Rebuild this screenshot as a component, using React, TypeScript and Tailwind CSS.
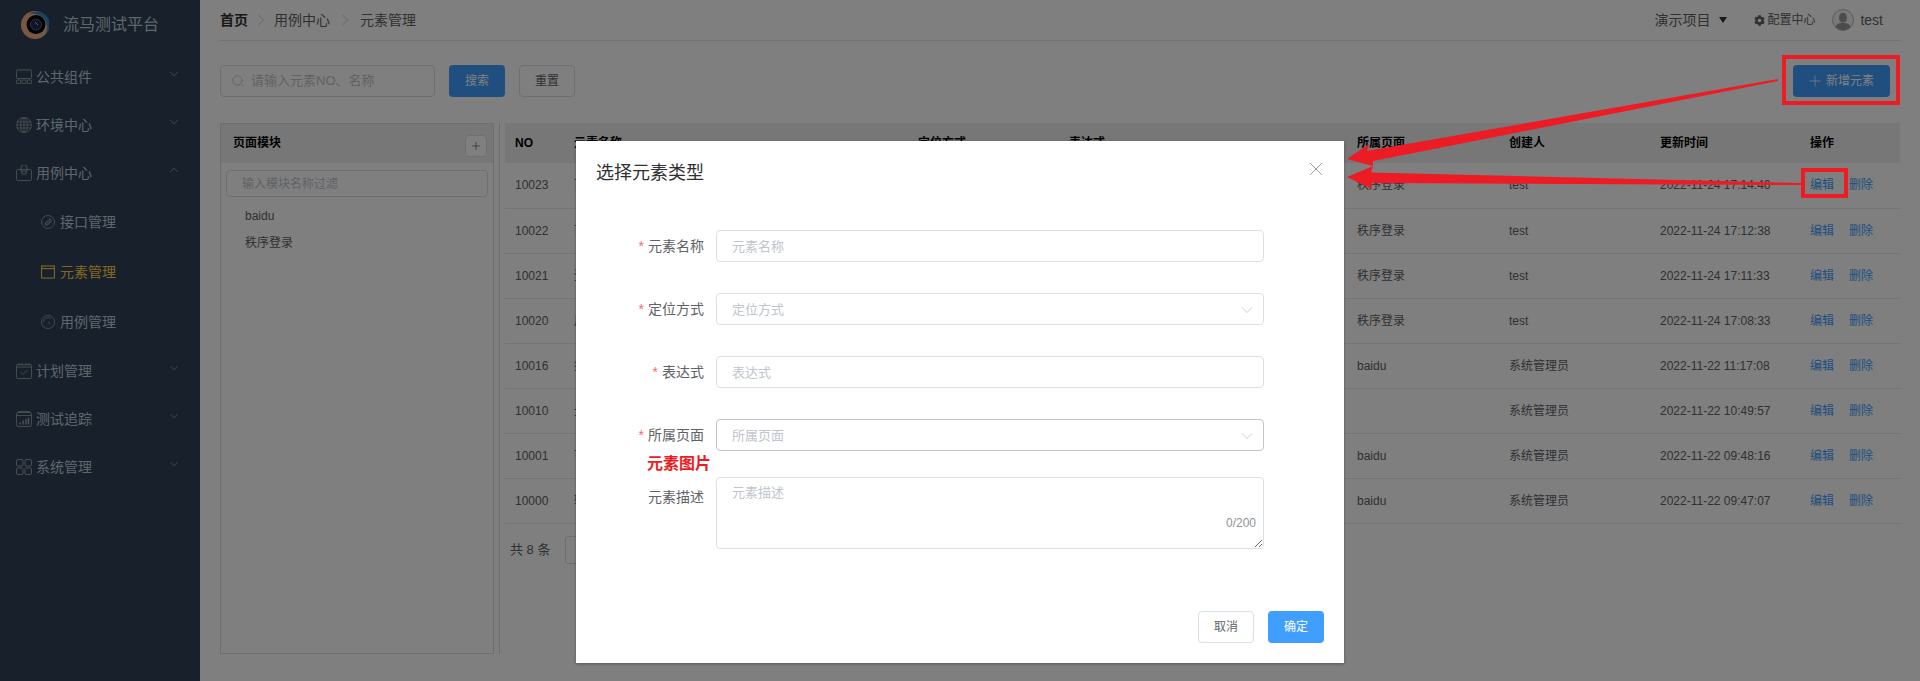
import React from 'react';
import { ChevronDown, ChevronRight, ChevronUp, Plus, Search, X } from 'lucide-react';
import { FaCog } from 'react-icons/fa';

const IconCard = () => (
  <svg viewBox="0 0 16 16" className="w-4 h-4 shrink-0" fill="none" stroke="currentColor" strokeWidth="0.8">
    <rect x="0.5" y="1" width="15" height="8.5" rx="1" />
    <rect x="0.5" y="11" width="4" height="3.5" rx="0.5" />
    <rect x="6" y="11" width="4" height="3.5" rx="0.5" />
    <rect x="11.5" y="11" width="4" height="3.5" rx="0.5" />
  </svg>
);

const IconGlobe = () => (
  <svg viewBox="0 0 16 16" className="w-4 h-4 shrink-0" fill="none" stroke="currentColor" strokeWidth="0.8">
    <circle cx="8" cy="8" r="7.4" />
    <ellipse cx="8" cy="8" rx="3.4" ry="7.4" />
    <path d="M8 .6v14.8M1.2 5h13.6M1.2 11h13.6M.6 8h14.8" />
  </svg>
);

const IconBag = () => (
  <svg viewBox="0 0 16 16" className="w-4 h-4 shrink-0" fill="none" stroke="currentColor" strokeWidth="0.8">
    <rect x="0.5" y="4.5" width="15" height="11" rx="1" />
    <path d="M5 7V3a3 3 0 0 1 6 0v4" />
    <rect x="6" y="6" width="4" height="3" />
  </svg>
);

const IconLink = () => (
  <svg viewBox="0 0 14 14" className="w-3.5 h-3.5 shrink-0" fill="none" stroke="currentColor" strokeWidth="0.8">
    <circle cx="7" cy="7" r="6.5" />
    <path d="M4.5 8 8 4.5a1.4 1.4 0 0 1 2 2L6.5 10a1.4 1.4 0 0 1-2-2Z" fill="currentColor" fillOpacity="0.4" />
  </svg>
);

const IconWindow = () => (
  <svg viewBox="0 0 14 14" className="w-3.5 h-3.5 shrink-0" fill="none" stroke="currentColor" strokeWidth="1.1">
    <rect x="0.6" y="1" width="12.8" height="12" />
    <path d="M.6 3.6h12.8" />
  </svg>
);

const IconGauge = () => (
  <svg viewBox="0 0 14 14" className="w-3.5 h-3.5 shrink-0" fill="none" stroke="currentColor" strokeWidth="0.8">
    <circle cx="7" cy="7" r="6.5" />
    <path d="M2.5 7a4.5 4.5 0 0 1 7-3.7M7 7 9.5 9" />
  </svg>
);

const IconCalendar = () => (
  <svg viewBox="0 0 16 16" className="w-4 h-4 shrink-0" fill="none" stroke="currentColor" strokeWidth="0.8">
    <rect x="0.5" y="1.5" width="15" height="14" rx="0.8" />
    <path d="M.5 4h15M3 .4v2M6 .4v2M10 .4v2M13 .4v2M4.5 9l2.5 2.5 4.5-4.5" />
  </svg>
);

const IconReport = () => (
  <svg viewBox="0 0 16 16" className="w-4 h-4 shrink-0" fill="none" stroke="currentColor" strokeWidth="0.8">
    <rect x="0.5" y="1.5" width="15" height="14" rx="1.5" />
    <path d="M.5 4.5h15M2 .5h12" />
    <path d="M4 13.5v-2M7 13.5v-4M10 13.5V8M12.5 13.5V6.5" strokeWidth="1.4" />
  </svg>
);

const IconGrid = () => (
  <svg viewBox="0 0 16 16" className="w-4 h-4 shrink-0" fill="none" stroke="currentColor" strokeWidth="0.9">
    <rect x="0.5" y="0.5" width="6.5" height="6.5" rx="1.2" />
    <rect x="9" y="0.5" width="6.5" height="6.5" rx="1.2" />
    <rect x="0.5" y="9" width="6.5" height="6.5" rx="1.2" />
    <rect x="9" y="9" width="6.5" height="6.5" rx="1.2" />
  </svg>
);

const Logo = () => (
  <svg viewBox="0 0 28 28" className="w-[28px] h-[28px] shrink-0">
    <circle cx="14" cy="14" r="14" fill="#f0b080" />
    <path d="M7 3.500A14 14 0 0 1 24 24 13 13 0 0 0 7 3.500Z" fill="#2f86c8" />
    <circle cx="15" cy="13.500" r="9.500" fill="#000000" />
    <circle cx="15" cy="13.500" r="5.500" fill="#1c2c50" stroke="#5a5a8a" strokeWidth="1" />
    <path d="M14 11l3 3" stroke="#b8b8d0" strokeWidth="1" />
  </svg>
);

const Avatar = () => (
  <svg viewBox="0 0 22 22" className="w-[22px] h-[22px] shrink-0">
    <circle cx="11" cy="11" r="10.500" fill="#f2f2f2" stroke="#b8b8b8" />
    <ellipse cx="11" cy="8.800" rx="4" ry="5" fill="#999999" />
    <path d="M3.500 18c1-3.500 4-4 7.500-4s6.500.5 7.500 4a10.500 10.500 0 0 1-15 0Z" fill="#999999" />
  </svg>
);

const TopItem = ({ icon, label, open }: { icon: React.ReactNode; label: string; open?: boolean }) => (
  <div className="h-12 flex items-center pl-4 pr-[19px] text-sm text-[#bfcbd9]">
    <span className="mr-1 text-[#a0a8b0]">{icon}</span>
    <span className="flex-1">{label}</span>
    {open ? (
      <ChevronUp className="w-3.5 h-3.5 -mt-1.5" strokeWidth={1} />
    ) : (
      <ChevronDown className="w-3.5 h-3.5 -mt-1.5" strokeWidth={1} />
    )}
  </div>
);

const SubItem = ({ icon, label, active }: { icon: React.ReactNode; label: string; active?: boolean }) => (
  <div className={`h-[50px] flex items-center pl-[41px] text-sm ${active ? 'text-[#ffd04b]' : 'text-[#bfcbd9]'}`}>
    <span className={`mr-[5px] ${active ? '' : 'text-[#a0a8b0]'}`}>{icon}</span>
    <span>{label}</span>
  </div>
);

const Sidebar = () => (
  <aside className="w-[200px] shrink-0 bg-[#304156]">
    <div className="h-[53px] flex items-center pl-[21px] pb-[4px]">
      <Logo />
      <span className="ml-[14px] text-base text-[#bfcbd9]">流马测试平台</span>
    </div>
    <TopItem icon={<IconCard />} label="公共组件" />
    <TopItem icon={<IconGlobe />} label="环境中心" />
    <TopItem icon={<IconBag />} label="用例中心" open />
    <SubItem icon={<IconLink />} label="接口管理" />
    <SubItem icon={<IconWindow />} label="元素管理" active />
    <SubItem icon={<IconGauge />} label="用例管理" />
    <TopItem icon={<IconCalendar />} label="计划管理" />
    <TopItem icon={<IconReport />} label="测试追踪" />
    <TopItem icon={<IconGrid />} label="系统管理" />
  </aside>
);

const Header = () => (
  <div className="h-[41px] flex items-center justify-between border-b border-[#e4e4e4] pr-[17px]">
    <div className="flex items-center text-sm text-[#606266]">
      <span className="font-semibold text-[#303133]">首页</span>
      <ChevronRight className="w-5 h-5 mx-[3px] text-[#c0c4cc]" strokeWidth={1} />
      <span>用例中心</span>
      <ChevronRight className="w-5 h-5 mx-[5px] text-[#c0c4cc]" strokeWidth={1} />
      <span>元素管理</span>
    </div>
    <div className="flex items-center text-[#606266]">
      <span className="text-sm">演示项目</span>
      <span className="ml-[9px] w-0 h-0 border-x-[4px] border-x-transparent border-t-[6px] border-t-[#303133]" />
      <FaCog className="ml-[27px] w-[11px] h-[11px]" />
      <span className="ml-[2px] text-xs">配置中心</span>
      <span className="ml-[17px]"><Avatar /></span>
      <span className="ml-[6px] text-sm">test</span>
    </div>
  </div>
);

const Toolbar = () => (
  <div className="mt-[24px] h-8 flex items-center">
    <div className="w-[215px] h-8 flex items-center border border-[#dcdfe6] rounded pl-[10px] bg-white">
      <Search className="w-[14px] h-[14px] text-[#c0c4cc]" strokeWidth={1.5} />
      <span className="ml-[6px] text-[13px] text-[#c0c4cc]">请输入元素NO、名称</span>
    </div>
    <button className="ml-[14px] w-14 h-8 rounded bg-[#409eff] text-xs text-white">搜索</button>
    <button className="ml-[14px] w-14 h-8 rounded border border-[#dcdfe6] bg-white text-xs text-[#606266]">重置</button>
    <button className="ml-auto mr-[10px] w-[97px] h-8 rounded bg-[#409eff] text-xs text-white flex items-center justify-center">
      <Plus className="w-[18px] h-[18px] -ml-[3px] mr-[2px]" strokeWidth={1} />
      新增元素
    </button>
  </div>
);

const ModulePanel = () => (
  <div className="w-[274px] h-[531px] shrink-0 border border-[#dddddd]">
    <div className="h-[39px] flex items-center justify-between bg-[#eeeeee] pl-3 pr-[6px] pb-[1px]">
      <span className="text-xs font-semibold text-black">页面模块</span>
      <span className="w-[22px] h-[22px] mt-[6px] flex items-center justify-center border border-[#dcdfe6] rounded-sm bg-white">
        <Plus className="w-3 h-3 text-[#606266]" strokeWidth={1.5} />
      </span>
    </div>
    <div className="mx-[5px] mt-[7px] h-[27px] flex items-center border border-[#dcdfe6] rounded pl-[15px] text-xs text-[#c0c4cc]">
      输入模块名称过滤
    </div>
    <div className="pl-6 pt-[6px] text-xs text-[#606266]">
      <div className="h-[27px] leading-[27px]">baidu</div>
      <div className="h-[27px] leading-[27px]">秩序登录</div>
    </div>
  </div>
);

const rows = [
  ['10023', '百度输入框', 'xpath', '//input', '秩序登录', 'test', '2022-11-24 17:14:46'],
  ['10022', '百度按钮', 'xpath', '//button', '秩序登录', 'test', '2022-11-24 17:12:38'],
  ['10021', '登录按钮', 'xpath', '//button', '秩序登录', 'test', '2022-11-24 17:11:33'],
  ['10020', '用户名', 'xpath', '//input', '秩序登录', 'test', '2022-11-24 17:08:33'],
  ['10016', '搜索框', 'id', 'kw', 'baidu', '系统管理员', '2022-11-22 11:17:08'],
  ['10010', '元素', 'id', 'su', '', '系统管理员', '2022-11-22 10:49:57'],
  ['10001', '百度一下', 'id', 'su', 'baidu', '系统管理员', '2022-11-22 09:48:16'],
  ['10000', '输入框', 'id', 'kw', 'baidu', '系统管理员', '2022-11-22 09:47:07'],
];

const headers = ['NO', '元素名称', '定位方式', '表达式', '所属页面', '创建人', '更新时间', '操作'];

const ElementTable = () => (
  <div className="flex-1 min-w-0">
    <table className="w-full table-fixed text-xs text-[#606266]">
      <colgroup>
        <col className="w-[59px]" />
        <col className="w-[344px]" />
        <col className="w-[151px]" />
        <col className="w-[288px]" />
        <col className="w-[152px]" />
        <col className="w-[151px]" />
        <col className="w-[150px]" />
        <col />
      </colgroup>
      <thead>
        <tr className="h-10 bg-[#eeeeee] text-black">
          {headers.map((h) => (
            <th key={h} className="pl-[10px] text-left font-semibold">{h}</th>
          ))}
        </tr>
      </thead>
      <tbody>
        {rows.map((row) => (
          <tr key={row[0]} className="h-[45px] border-b border-[#e8e8e8]">
            {row.map((cell, i) => (
              <td key={i} className="pl-[10px]">{cell}</td>
            ))}
            <td className="pl-[10px] text-[#409eff]">
              <span>编辑</span>
              <span className="ml-[15px]">删除</span>
            </td>
          </tr>
        ))}
      </tbody>
    </table>
    <div className="mt-[12px] h-[28px] flex items-center pl-[5px] text-[13px] text-[#606266]">
      <span>共 8 条</span>
      <span className="ml-[15px] w-[100px] h-[28px] border border-[#dcdfe6] rounded-[3px]" />
    </div>
  </div>
);

const Field = ({ label, required, select, hovered }: { label: string; required?: boolean; select?: boolean; hovered?: boolean }) => (
  <div className="h-8 mb-[31px] flex items-center">
    <label className="w-[128px] text-right text-sm text-[#606266]">
      {required && <span className="mr-1 text-[#f56c6c]">*</span>}
      {label}
    </label>
    <div className={`relative ml-3 w-[548px] h-8 border rounded ${hovered ? 'border-[#c0c4cc]' : 'border-[#dcdfe6]'}`}>
      <input
        readOnly
        placeholder={label}
        className="w-full h-full px-[15px] rounded text-[13px] outline-none placeholder:text-[#c0c4cc]"
      />
      {select && <ChevronDown className="absolute right-[6px] top-[6px] w-5 h-5 text-[#c0c4cc]" strokeWidth={1} />}
    </div>
  </div>
);

const ElementDialog = () => (
  <div className="w-[768px] h-[522px] mt-[141px] flex flex-col bg-white shadow-[0_1px_3px_rgba(0,0,0,0.3)]">
    <div className="h-[89px] flex justify-between pl-5 pr-[17px] pt-[20px]">
      <span className="text-lg leading-6 text-[#303133]">选择元素类型</span>
      <X className="w-[22px] h-[22px] -mt-[3px] text-[#909399]" strokeWidth={1} />
    </div>
    <Field label="元素名称" required />
    <Field label="定位方式" required select />
    <Field label="表达式" required />
    <Field label="所属页面" required select hovered />
    <div className="h-[26px] -mt-[31px] pl-[71px] flex items-center text-base font-bold text-[#ed1c24]">元素图片</div>
    <div className="flex">
      <label className="w-[128px] pt-[10px] text-right text-sm text-[#606266]">元素描述</label>
      <div className="relative ml-3 w-[548px] h-[72px]">
        <textarea
          readOnly
          placeholder="元素描述"
          className="block w-full h-full px-[15px] py-[5px] border border-[#dcdfe6] rounded text-[13px] outline-none placeholder:text-[#c0c4cc]"
        />
        <span className="absolute right-[8px] bottom-[18px] text-xs text-[#909399]">0/200</span>
      </div>
    </div>
    <div className="mt-auto pb-5 pr-5 flex justify-end">
      <button className="w-14 h-8 border border-[#dcdfe6] rounded text-xs text-[#606266]">取消</button>
      <button className="ml-[14px] w-14 h-8 rounded bg-[#409eff] text-xs text-white">确定</button>
    </div>
  </div>
);

const Annotations = () => (
  <>
    <svg className="absolute inset-0 w-[1920px] h-[681px] pointer-events-none" viewBox="0 0 1920 681">
      <polygon fill="#ed1c24" points="1347,159 1369,144 1367,151 1778,79 1778,81 1373,161 1373,166" />
      <polygon fill="#ed1c24" points="1347,177 1373,166 1371,172.500 1802,183 1802,185 1371,183 1372,189" />
    </svg>
    <div className="absolute left-[1782px] top-[55px] w-[118px] h-[50px] border-4 border-[#ed1c24]" />
    <div className="absolute left-[1801px] top-[168px] w-[47px] h-[30px] border-4 border-[#ed1c24]" />
  </>
);

export default function App() {
  return (
    <div className="relative h-screen flex overflow-hidden bg-white font-['Liberation_Sans','Noto_Sans_CJK_SC',sans-serif]">
      <Sidebar />
      <main className="flex-1 min-w-0 pl-5 pr-5">
        <Header />
        <Toolbar />
        <div className="mt-[26px] flex">
          <ModulePanel />
          <div className="ml-[5px] mr-[5px] w-px h-[531px] bg-[#dddddd]" />
          <ElementTable />
        </div>
      </main>
      <div className="absolute inset-0 flex justify-center bg-black/50">
        <ElementDialog />
      </div>
      <Annotations />
    </div>
  );
}
